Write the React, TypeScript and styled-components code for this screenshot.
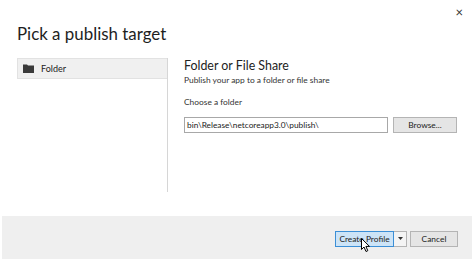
import React from "react";
import styled, { createGlobalStyle } from "styled-components";

const GlobalStyle = createGlobalStyle`
  html, body {
    margin: 0;
    padding: 0;
    background: #ffffff;
  }
  body {
    font-family: Lato, "Noto Sans", sans-serif;
    color: #1e1e1e;
  }
`;

const Dialog = styled.div`
  box-sizing: border-box;
  width: 474px;
  height: 261px;
  padding: 0 2px 2px 2px;
  display: flex;
  flex-direction: column;
  position: relative;
  overflow: hidden;
`;

const Header = styled.div`
  display: flex;
  flex-direction: column;
  padding: 0 0 0 15px;
`;

const CloseRow = styled.div`
  display: flex;
  justify-content: flex-end;
  height: 20px;
  padding: 6px 9px 0 0;
  box-sizing: border-box;
`;

const CloseButton = styled.span`
  font-size: 13px;
  line-height: 13px;
  color: #333;
`;

const Title = styled.h1`
  margin: 2px 0 0 0;
  font-size: 16.9px;
  font-weight: 400;
  line-height: 24px;
  color: #1e1e1e;
`;

const Body = styled.div`
  display: flex;
  padding: 12px 0 0 15px;
  height: 134px;
`;

const TargetList = styled.div`
  width: 150px;
  display: flex;
  flex-direction: column;
  border-right: 1px solid #d6d6d6;
`;

const TargetItem = styled.div`
  display: flex;
  align-items: center;
  gap: 7px;
  height: 19px;
  padding-left: 5px;
  background: #f0f0f0;
  border: 1px solid #e2e2e2;
  border-right: none;
  font-size: 9px;
  color: #222;
`;

const Details = styled.div`
  display: flex;
  flex-direction: column;
  padding-left: 16px;
  flex: 1;
`;

const DetailsTitle = styled.div`
  font-size: 12.4px;
  font-weight: 400;
  line-height: 17px;
  color: #222;
  margin-top: -1px;
`;

const SmallText = styled.div<{ $gap?: number }>`
  font-size: 8.4px;
  line-height: 13px;
  color: #333;
  margin-top: ${(p) => p.$gap ?? 0}px;
`;

const PathRow = styled.div`
  display: flex;
  gap: 5px;
  margin-top: 8px;
`;

const PathInput = styled.div`
  box-sizing: border-box;
  width: 204px;
  height: 16px;
  border: 1px solid #a8a8a8;
  padding: 0 2px;
  font-size: 8.3px;
  line-height: 14px;
  color: #222;
  white-space: nowrap;
  overflow: hidden;
`;

const Button = styled.div<{ $primary?: boolean; $width: number }>`
  box-sizing: border-box;
  width: ${(p) => p.$width}px;
  height: 16px;
  display: flex;
  align-items: center;
  justify-content: center;
  white-space: nowrap;
  font-size: 8.4px;
  color: #222;
  background: ${(p) => (p.$primary ? "#cde4f7" : "#e5e5e5")};
  border: 1px solid ${(p) => (p.$primary ? "#3c8fd6" : "#b4b4b4")};
`;

const Spacer = styled.div`
  flex: 1;
`;

const Footer = styled.div`
  height: 43px;
  background: #efefef;
  display: flex;
  align-items: center;
  justify-content: flex-end;
  padding-right: 14px;
  padding-top: 2px;
  box-sizing: border-box;
  gap: 3px;
`;

const SplitButton = styled.div`
  display: flex;
`;

const DropPart = styled.div`
  box-sizing: border-box;
  width: 13px;
  height: 16px;
  display: flex;
  align-items: center;
  justify-content: center;
  background: #f4f4f4;
  border: 1px solid #b4b4b4;
  border-left: none;
`;

const Cursor = styled.svg`
  position: absolute;
  left: 361px;
  top: 238px;
`;

function FolderIcon() {
  return (
    <svg width="11" height="9" viewBox="0 0 11 9">
      <path d="M0 0.5 H4 L5 1.5 H11 V9 H0 Z" fill="#3a3a3a" />
    </svg>
  );
}

export default function App() {
  return (
    <>
      <GlobalStyle />
      <Dialog>
        <Header>
          <CloseRow>
            <CloseButton>×</CloseButton>
          </CloseRow>
          <Title>Pick a publish target</Title>
        </Header>
        <Body>
          <TargetList>
            <TargetItem>
              <FolderIcon />
              Folder
            </TargetItem>
          </TargetList>
          <Details>
            <DetailsTitle>Folder or File Share</DetailsTitle>
            <SmallText>Publish your app to a folder or file share</SmallText>
            <SmallText $gap={9}>Choose a folder</SmallText>
            <PathRow>
              <PathInput>bin\Release\netcoreapp3.0\publish\</PathInput>
              <Button $width={64}>Browse...</Button>
            </PathRow>
          </Details>
        </Body>
        <Spacer />
        <Footer>
          <SplitButton>
            <Button $primary $width={59}>Create Profile</Button>
            <DropPart>
              <svg width="5" height="3" viewBox="0 0 5 3">
                <path d="M0 0 H5 L2.5 3 Z" fill="#333" />
              </svg>
            </DropPart>
          </SplitButton>
          <Button $width={48}>Cancel</Button>
        </Footer>
        <Cursor width="10" height="15" viewBox="0 0 10 15">
          <path
            d="M0.5 0.5 L0.5 11.5 L3 9 L5 13.5 L6.8 12.7 L4.9 8.4 L8.5 8.4 Z"
            fill="#ffffff"
            stroke="#000000"
            strokeWidth="1"
          />
        </Cursor>
      </Dialog>
    </>
  );
}
